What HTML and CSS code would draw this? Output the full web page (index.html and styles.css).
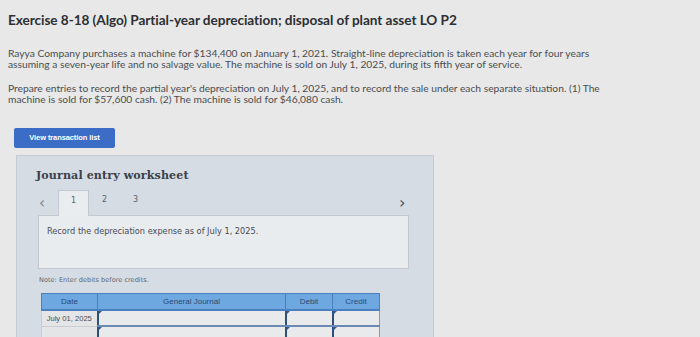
FILE: index.html
```html
<!DOCTYPE html>
<html>
<head>
<meta charset="utf-8">
<link rel="stylesheet" href="styles.css">
</head>
<body>
<div class="page">
  <h1 class="title">Exercise 8-18 (Algo) Partial-year depreciation; disposal of plant asset LO P2</h1>
  <p class="para">Rayya Company purchases a machine for $134,400 on January 1, 2021. Straight-line depreciation is taken each year for four years assuming a seven-year life and no salvage value. The machine is sold on July 1, 2025, during its fifth year of service.</p>
  <p class="para para2">Prepare entries to record the partial year's depreciation on July 1, 2025, and to record the sale under each separate situation. (1) The machine is sold for $57,600 cash. (2) The machine is sold for $46,080 cash.</p>
  <div class="btn">View transaction list</div>
  <div class="panel">
    <div class="ws-title">Journal entry worksheet</div>
    <div class="tabs">
      <span class="arrow">&lsaquo;</span>
      <span class="tab active">1</span>
      <span class="tab">2</span>
      <span class="tab">3</span>
      <span class="spacer"></span>
      <span class="arrow right">&rsaquo;</span>
    </div>
    <div class="content">Record the depreciation expense as of July 1, 2025.</div>
    <div class="note">Note: Enter debits before credits.</div>
    <table class="jt">
      <tr>
        <th class="c-date">Date</th>
        <th class="c-gj">General Journal</th>
        <th class="c-num">Debit</th>
        <th class="c-num">Credit</th>
      </tr>
      <tr>
        <td class="date">July 01, 2025</td>
        <td class="in"></td>
        <td class="in"></td>
        <td class="in"></td>
      </tr>
      <tr>
        <td class="date"></td>
        <td class="in"></td>
        <td class="in"></td>
        <td class="in"></td>
      </tr>
    </table>
  </div>
</div>
</body>
</html>
```

FILE: styles.css
```css
html, body {
  margin: 0;
  padding: 0;
  background: #e7e8e7;
  overflow: hidden;
}
.page {
  width: 700px;
  height: 337px;
  padding: 12px 0 0 8px;
  box-sizing: border-box;
  font-family: Lato, "Open Sans", sans-serif;
  color: #3a3d42;
  overflow: hidden;
}
.title {
  margin: 0;
  font-size: 13.6px;
  font-weight: 700;
  color: #2c2f33;
  letter-spacing: -0.05px;
}
.para {
  margin: 20px 0 0 0;
  width: 598px;
  font-size: 10.25px;
  line-height: 11px;
  color: #4a4d52;
}
.para2 {
  margin-top: 13px;
}
.btn {
  margin: 23px 0 0 6px;
  width: 101px;
  height: 20px;
  background: #3b6cc6;
  border-radius: 2px;
  color: #fff;
  font-family: "Liberation Sans", Arial, sans-serif;
  font-weight: 700;
  font-size: 7.5px;
  line-height: 20px;
  text-align: center;
  letter-spacing: -0.1px;
}
.panel {
  margin: 7px 0 0 8px;
  width: 418px;
  height: 182px;
  box-sizing: border-box;
  background: #d6dce4;
  border: 1px solid #c5ccd4;
  border-bottom: none;
  padding: 0 0 0 21px;
  overflow: hidden;
}
.ws-title {
  margin: 13px 0 0 -2px;
  font-family: "DejaVu Serif", "Liberation Serif", serif;
  font-weight: 700;
  font-size: 11.1px;
  color: #3c4047;
  letter-spacing: 0.1px;
}
.tabs {
  margin-top: 8px;
  display: flex;
  align-items: flex-end;
  height: 25px;
  width: 372px;
}
.arrow {
  width: 20px;
  font-family: "DejaVu Sans", sans-serif;
  font-size: 15px;
  color: #7b8591;
  line-height: 20px;
  padding-left: 1px;
  box-sizing: border-box;
  align-self: center;
}
.arrow.right {
  width: 12px;
  color: #4b5260;
  font-size: 16px;
}
.spacer { flex: 1; }
.tab {
  width: 31px;
  height: 25px;
  box-sizing: border-box;
  text-align: center;
  font-family: "DejaVu Sans", sans-serif;
  font-size: 8px;
  line-height: 19px;
  color: #5b6068;
}
.tab.active {
  background: #eaedf0;
  border: 1px solid #c4c9cf;
  border-bottom: none;
  margin-bottom: -1px;
  height: 26px;
}
.content {
  width: 371px;
  height: 54px;
  box-sizing: border-box;
  background: #e9ecef;
  border: 1px solid #c4c9cf;
  font-family: "DejaVu Sans", sans-serif;
  font-size: 8.2px;
  color: #474b52;
  padding: 10px 0 0 8px;
}
.note {
  margin: 7px 0 0 1px;
  font-family: "DejaVu Sans", sans-serif;
  font-size: 6.6px;
  color: #5d6470;
}
.jt {
  margin: 9px 0 0 3px;
  border-collapse: collapse;
  font-family: "Liberation Sans", Arial, sans-serif;
  font-size: 8px;
}
.jt th {
  background: #6ea8e0;
  color: #2a4a74;
  font-weight: 400;
  height: 15px;
  padding: 0;
  border: 1px solid #4b7fbd;
  border-bottom: 2px solid #4b7fbd;
}
.c-date { width: 55px; }
.c-gj { width: 187px; }
.c-num { width: 46px; }
.jt td {
  height: 14px;
  padding: 0;
}
.jt td.date {
  background: #e3e5e7;
  border: 1px solid #c9cdd1;
  color: #4a4e55;
  text-align: center;
  font-size: 7.6px;
}
.jt td.in {
  background: #e8eaec;
  border: 1px solid #7d9cc4;
  border-left: 2px solid #2f4f7d;
  border-bottom: 2px solid #6a89b3;
  position: relative;
}
.jt td.in::before {
  content: "";
  position: absolute;
  left: 0;
  top: 0;
  border-top: 3px solid #2e5da0;
  border-right: 3px solid transparent;
}
```
